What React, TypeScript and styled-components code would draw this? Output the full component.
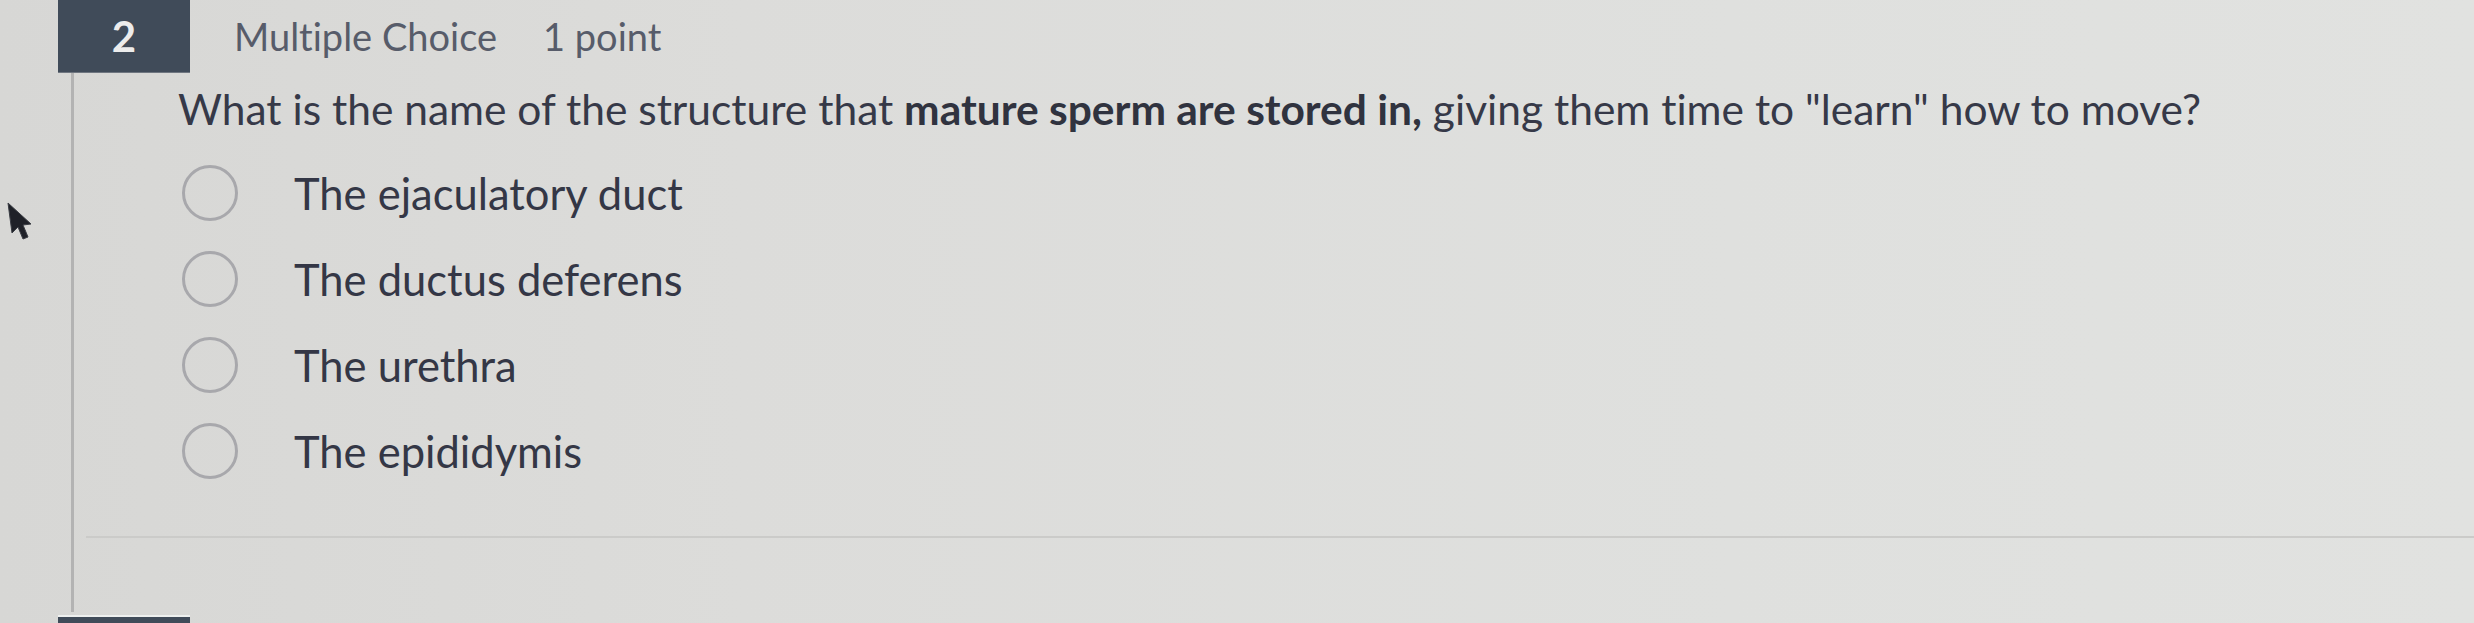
import React from "react";
import styled, { createGlobalStyle } from "styled-components";

const Global = createGlobalStyle`
  html, body {
    margin: 0;
    padding: 0;
    width: 2474px;
    height: 623px;
    overflow: hidden;
    background: linear-gradient(90deg, #d7d7d5 0%, #dcdcda 30%, #dfe0de 70%, #e1e2e0 100%);
    font-family: Lato, "Open Sans", sans-serif;
    font-variant-ligatures: none;
  }
`;

const Page = styled.div`
  position: relative;
  width: 2474px;
  height: 623px;
  padding-left: 58px;
  box-sizing: border-box;
  overflow: hidden;
`;

const Header = styled.div`
  display: flex;
  align-items: center;
  height: 72px;
`;

const Badge = styled.div<{ $top?: boolean }>`
  width: 132px;
  height: 72px;
  flex: none;
  background: #404b59;
  color: #ececec;
  font-weight: 700;
  font-size: 42px;
  display: flex;
  align-items: center;
  justify-content: center;
  box-shadow: 0 1px 0 #6f7680;
  border-top: ${(p) => (p.$top ? "2px solid #eef0ef" : "none")};
  box-sizing: border-box;
`;

const Meta = styled.div`
  display: flex;
  align-items: center;
  gap: 46px;
  margin-left: 44px;
  font-size: 38px;
  color: #575c6a;
`;

const Body = styled.div`
  margin-left: 13px;
  height: 540px;
  border-left: 3px solid #b3b3b3;
  padding-left: 12px;
  box-sizing: border-box;
  display: flex;
  flex-direction: column;
`;

const Question = styled.p`
  margin: 12px 0 0 92px;
  font-size: 42.5px;
  line-height: 50px;
  color: #363948;
  white-space: nowrap;

  strong {
    font-weight: 700;
    color: #30333f;
  }
`;

const Options = styled.div`
  display: flex;
  flex-direction: column;
  margin: 16px 0 0 96px;
`;

const OptionRow = styled.label`
  display: flex;
  align-items: center;
  height: 86px;
  gap: 56px;
`;

const Radio = styled.span`
  width: 56px;
  height: 56px;
  border-radius: 50%;
  border: 3px solid #a8a8ac;
  box-sizing: border-box;
  flex: none;
`;

const OptionText = styled.span`
  font-size: 43.5px;
  color: #343746;
`;

const Divider = styled.div`
  margin-top: auto;
  margin-bottom: 74px;
  height: 2px;
  background: #cbcbc9;
`;

const NextHeader = styled.div`
  margin-top: 3px;
  display: flex;
`;

const Cursor = styled.svg`
  position: absolute;
  left: 4px;
  top: 199px;
  width: 30px;
  height: 46px;
`;

const options = [
  "The ejaculatory duct",
  "The ductus deferens",
  "The urethra",
  "The epididymis",
];

export default function App() {
  return (
    <>
      <Global />
      <Page>
        <Header>
          <Badge>2</Badge>
          <Meta>
            <span>Multiple Choice</span>
            <span>1 point</span>
          </Meta>
        </Header>
        <Body>
          <Question>
            What is the name of the structure that{" "}
            <strong>mature sperm are stored in,</strong> giving them time to
            "learn" how to move?
          </Question>
          <Options>
            {options.map((o) => (
              <OptionRow key={o}>
                <Radio />
                <OptionText>{o}</OptionText>
              </OptionRow>
            ))}
          </Options>
          <Divider />
        </Body>
        <NextHeader>
          <Badge $top />
        </NextHeader>
        <Cursor viewBox="0 0 30 46">
          <path
            d="M4 4 L8 34 L14 28 L19 40 L24 38 L19 26 L27 25 Z"
            fill="#1f2128"
            stroke="#3a3d44"
            strokeWidth="1"
            strokeLinejoin="round"
          />
        </Cursor>
      </Page>
    </>
  );
}
